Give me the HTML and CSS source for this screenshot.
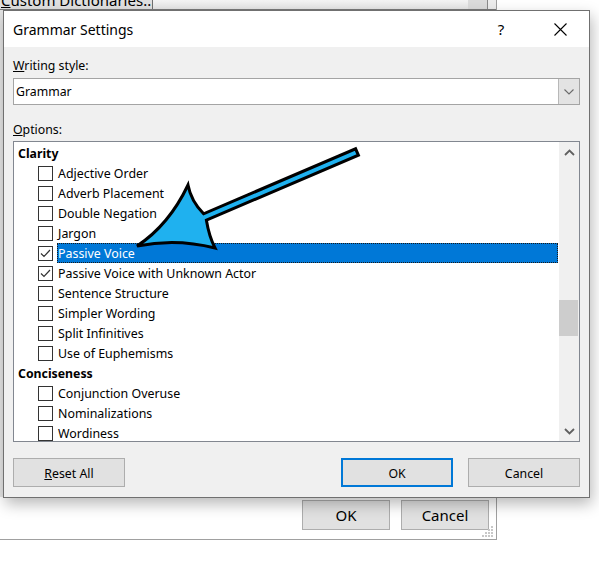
FILE: index.html
```html
<!DOCTYPE html>
<html lang="en">
<head>
<meta charset="utf-8">
<title>Grammar Settings</title>
<link rel="stylesheet" href="styles.css">
</head>
<body>
<div class="bgwin">
  <div class="topstrip">
    <div class="cd-btn"><span class="cd-text"><u>C</u>ustom Dictionaries...</span></div>
    <div class="strip-fill"></div>
    <div class="strip-dark"></div>
    <div class="strip-gap"></div>
  </div>
  <div class="bgbody">
    <div class="leftstrip"></div>
  </div>
  <div class="bgfooter">
    <div class="bgbtn">OK</div>
    <div class="bgbtn">Cancel</div>
  </div>
  <svg class="grip" width="12" height="12" viewBox="0 0 12 12">
    <g fill="#c8c8c8">
      <rect x="9" y="1" width="2" height="2"/>
      <rect x="6" y="4" width="2" height="2"/><rect x="9" y="4" width="2" height="2"/>
      <rect x="3" y="7" width="2" height="2"/><rect x="6" y="7" width="2" height="2"/><rect x="9" y="7" width="2" height="2"/>
      <rect x="0" y="10" width="2" height="2"/><rect x="3" y="10" width="2" height="2"/><rect x="6" y="10" width="2" height="2"/><rect x="9" y="10" width="2" height="2"/>
    </g>
  </svg>
</div>

<div class="dialog">
  <div class="titlebar">
    <div class="title">Grammar Settings</div>
    <div class="help">?</div>
    <svg class="close" width="13" height="13" viewBox="0 0 13 13">
      <path d="M0.5 0.5 L12.5 12.5 M12.5 0.5 L0.5 12.5" stroke="#000" stroke-width="1.1" fill="none"/>
    </svg>
  </div>
  <div class="dbody">
    <div class="lbl"><u>W</u>riting style:</div>
    <div class="combo">
      <div class="combo-text">Grammar</div>
      <div class="combo-btn">
        <svg width="10" height="6" viewBox="0 0 10 6"><path d="M0.5 0.5 L5 5 L9.5 0.5" stroke="#6a6a6a" stroke-width="1.1" fill="none"/></svg>
      </div>
    </div>
    <div class="lbl lbl-opt"><u>O</u>ptions:</div>
    <div class="list">
      <div class="items">
        <div class="cat">Clarity</div>
        <div class="row"><span class="cb"></span><span class="txt">Adjective Order</span></div>
        <div class="row"><span class="cb"></span><span class="txt">Adverb Placement</span></div>
        <div class="row"><span class="cb"></span><span class="txt">Double Negation</span></div>
        <div class="row"><span class="cb"></span><span class="txt">Jargon</span></div>
        <div class="row sel"><span class="cb"><svg width="13" height="13" viewBox="0 0 13 13"><path d="M2 6.5 L5 9.5 L11 3" stroke="#333" stroke-width="1.2" fill="none"/></svg></span><span class="txt">Passive Voice</span></div>
        <div class="row"><span class="cb"><svg width="13" height="13" viewBox="0 0 13 13"><path d="M2 6.5 L5 9.5 L11 3" stroke="#333" stroke-width="1.2" fill="none"/></svg></span><span class="txt">Passive Voice with Unknown Actor</span></div>
        <div class="row"><span class="cb"></span><span class="txt">Sentence Structure</span></div>
        <div class="row"><span class="cb"></span><span class="txt">Simpler Wording</span></div>
        <div class="row"><span class="cb"></span><span class="txt">Split Infinitives</span></div>
        <div class="row"><span class="cb"></span><span class="txt">Use of Euphemisms</span></div>
        <div class="cat">Conciseness</div>
        <div class="row"><span class="cb"></span><span class="txt">Conjunction Overuse</span></div>
        <div class="row"><span class="cb"></span><span class="txt">Nominalizations</span></div>
        <div class="row"><span class="cb"></span><span class="txt">Wordiness</span></div>
      </div>
      <div class="scroll">
        <div class="sbtn">
          <svg width="11" height="7" viewBox="0 0 11 7"><path d="M1 6 L5.5 1.5 L10 6" stroke="#606060" stroke-width="1.8" fill="none"/></svg>
        </div>
        <div class="track"><div class="thumb"></div></div>
        <div class="sbtn">
          <svg width="11" height="7" viewBox="0 0 11 7"><path d="M1 1 L5.5 5.5 L10 1" stroke="#606060" stroke-width="1.8" fill="none"/></svg>
        </div>
      </div>
    </div>
    <div class="btnrow">
      <div class="btn"><u>R</u>eset All</div>
      <div class="spacer"></div>
      <div class="btn btn-default">OK</div>
      <div class="btn">Cancel</div>
    </div>
  </div>
</div>

<svg class="arrow" width="599" height="570" viewBox="0 0 599 570">
  <path d="M137 246 Q169 225 188 185 Q191 201 203.6 213.8 L355.6 148.8 L358.4 155.2 L206.4 220.2 Q209 236 215 248 Q176 238 137 246 Z"
        fill="#1fb1ef" stroke="#000" stroke-width="3" stroke-linejoin="miter"/>
</svg>
</body>
</html>
```
FILE: styles.css
```css
* { box-sizing: border-box; }
html, body { margin: 0; padding: 0; }
body {
  width: 599px;
  height: 570px;
  position: relative;
  overflow: hidden;
  background: #fff;
  color: #000;
  font-family: "Noto Sans", "Open Sans", sans-serif;
}

/* background window */
.bgwin {
  position: relative;
  width: 497px;
  height: 540px;
  border-right: 1px solid #a0a0a0;
  border-bottom: 1px solid #a0a0a0;
  display: flex;
  flex-direction: column;
}
.topstrip {
  height: 10px;
  display: flex;
  border-bottom: 1px solid #7a7a7a;
  background: linear-gradient(#f4f4f4, #e6e6e6);
}
.cd-btn {
  width: 153px;
  background: #e1e1e1;
  border-right: 1px solid #707070;
  overflow: hidden;
  font-size: 15px;
  line-height: 16px;
  padding-left: 1px;
}
.cd-text { display: block; margin-top: -8px; white-space: nowrap; }
.strip-fill { flex: 1; }
.strip-dark { width: 20px; background: #dcdcdc; border-right: 1px solid #8a8a8a; }
.strip-gap { width: 8px; background: #ededed; }
.bgbody { flex: 1; }
.leftstrip { width: 3px; height: 487px; background: #e4e4e4; }
.bgfooter {
  display: flex;
  justify-content: flex-end;
  gap: 11px;
  padding: 0 7px 9px 0;
}
.bgbtn {
  width: 88px;
  height: 30px;
  background: #e1e1e1;
  border: 1px solid #adadad;
  font-size: 15px;
  display: flex;
  align-items: center;
  justify-content: center;
}
.grip { position: absolute; right: 2px; bottom: 2px; }

/* dialog */
.dialog {
  position: absolute;
  left: 3px;
  top: 10px;
  width: 587px;
  height: 488px;
  border: 1px solid #707070;
  background: #f0f0f0;
  box-shadow: 2px 6px 14px rgba(0, 0, 0, 0.28);
  display: flex;
  flex-direction: column;
}
.titlebar {
  height: 36px;
  background: #fff;
  display: flex;
  align-items: center;
  padding: 0 22px 0 9px;
}
.title { flex: 1; font-size: 14px; }
.help { width: 12px; text-align: center; font-size: 15px; margin-right: 47px; }
.close { display: block; }

.dbody {
  flex: 1;
  padding: 9px 9px 0 9px;
  display: flex;
  flex-direction: column;
}
.lbl { font-size: 12.3px; line-height: 16px; height: 16px; padding-top: 2px; }
.lbl-opt { margin-top: 15px; }
.combo {
  margin-top: 6px;
  height: 27px;
  background: #fff;
  border: 1px solid #a4a4a4;
  display: flex;
}
.combo-text { flex: 1; font-size: 12.3px; line-height: 26px; padding-left: 2px; }
.combo-btn {
  width: 21px;
  background: #e3e3e3;
  border-left: 1px solid #b8b8b8;
  display: flex;
  align-items: center;
  justify-content: center;
}
.combo-btn svg { display: block; }

.list {
  margin-top: 5px;
  height: 301px;
  background: #fff;
  border: 1px solid #828790;
  display: flex;
}
.items { flex: 1; padding-top: 1px; overflow: hidden; }
.cat {
  height: 20px;
  line-height: 21px;
  padding-left: 4px;
  font-size: 12.3px;
  font-weight: bold;
}
.row {
  height: 20px;
  display: flex;
  align-items: center;
  padding-left: 24px;
}
.cb {
  width: 15px;
  height: 15px;
  border: 1px solid #333;
  background: #fff;
  flex: none;
}
.cb svg { display: block; }
.txt {
  flex: 1;
  height: 20px;
  line-height: 21px;
  margin-left: 4px;
  margin-right: 1px;
  padding-left: 1px;
  font-size: 12.4px;
  white-space: nowrap;
}
.sel .txt {
  background: #0078d7;
  color: #fff;
  outline: 1px dotted #1a1a1a;
  outline-offset: -1px;
}
.scroll {
  width: 20px;
  background: #f0f0f0;
  display: flex;
  flex-direction: column;
}
.sbtn {
  height: 20px;
  display: flex;
  align-items: center;
  justify-content: center;
}
.sbtn svg { display: block; }
.track { flex: 1; }
.thumb { margin-top: 138px; height: 36px; background: #cdcdcd; margin-right: 1px; }

.btnrow { margin-top: 16px; display: flex; gap: 15px; }
.spacer { flex: 1; }
.btn {
  width: 112px;
  height: 29px;
  background: #e1e1e1;
  border: 1px solid #adadad;
  font-size: 12.3px;
  display: flex;
  align-items: center;
  justify-content: center;
  padding-top: 1px;
}
.btn-default { border: 2px solid #0078d7; }

.arrow { position: absolute; left: 0; top: 0; pointer-events: none; }
```
